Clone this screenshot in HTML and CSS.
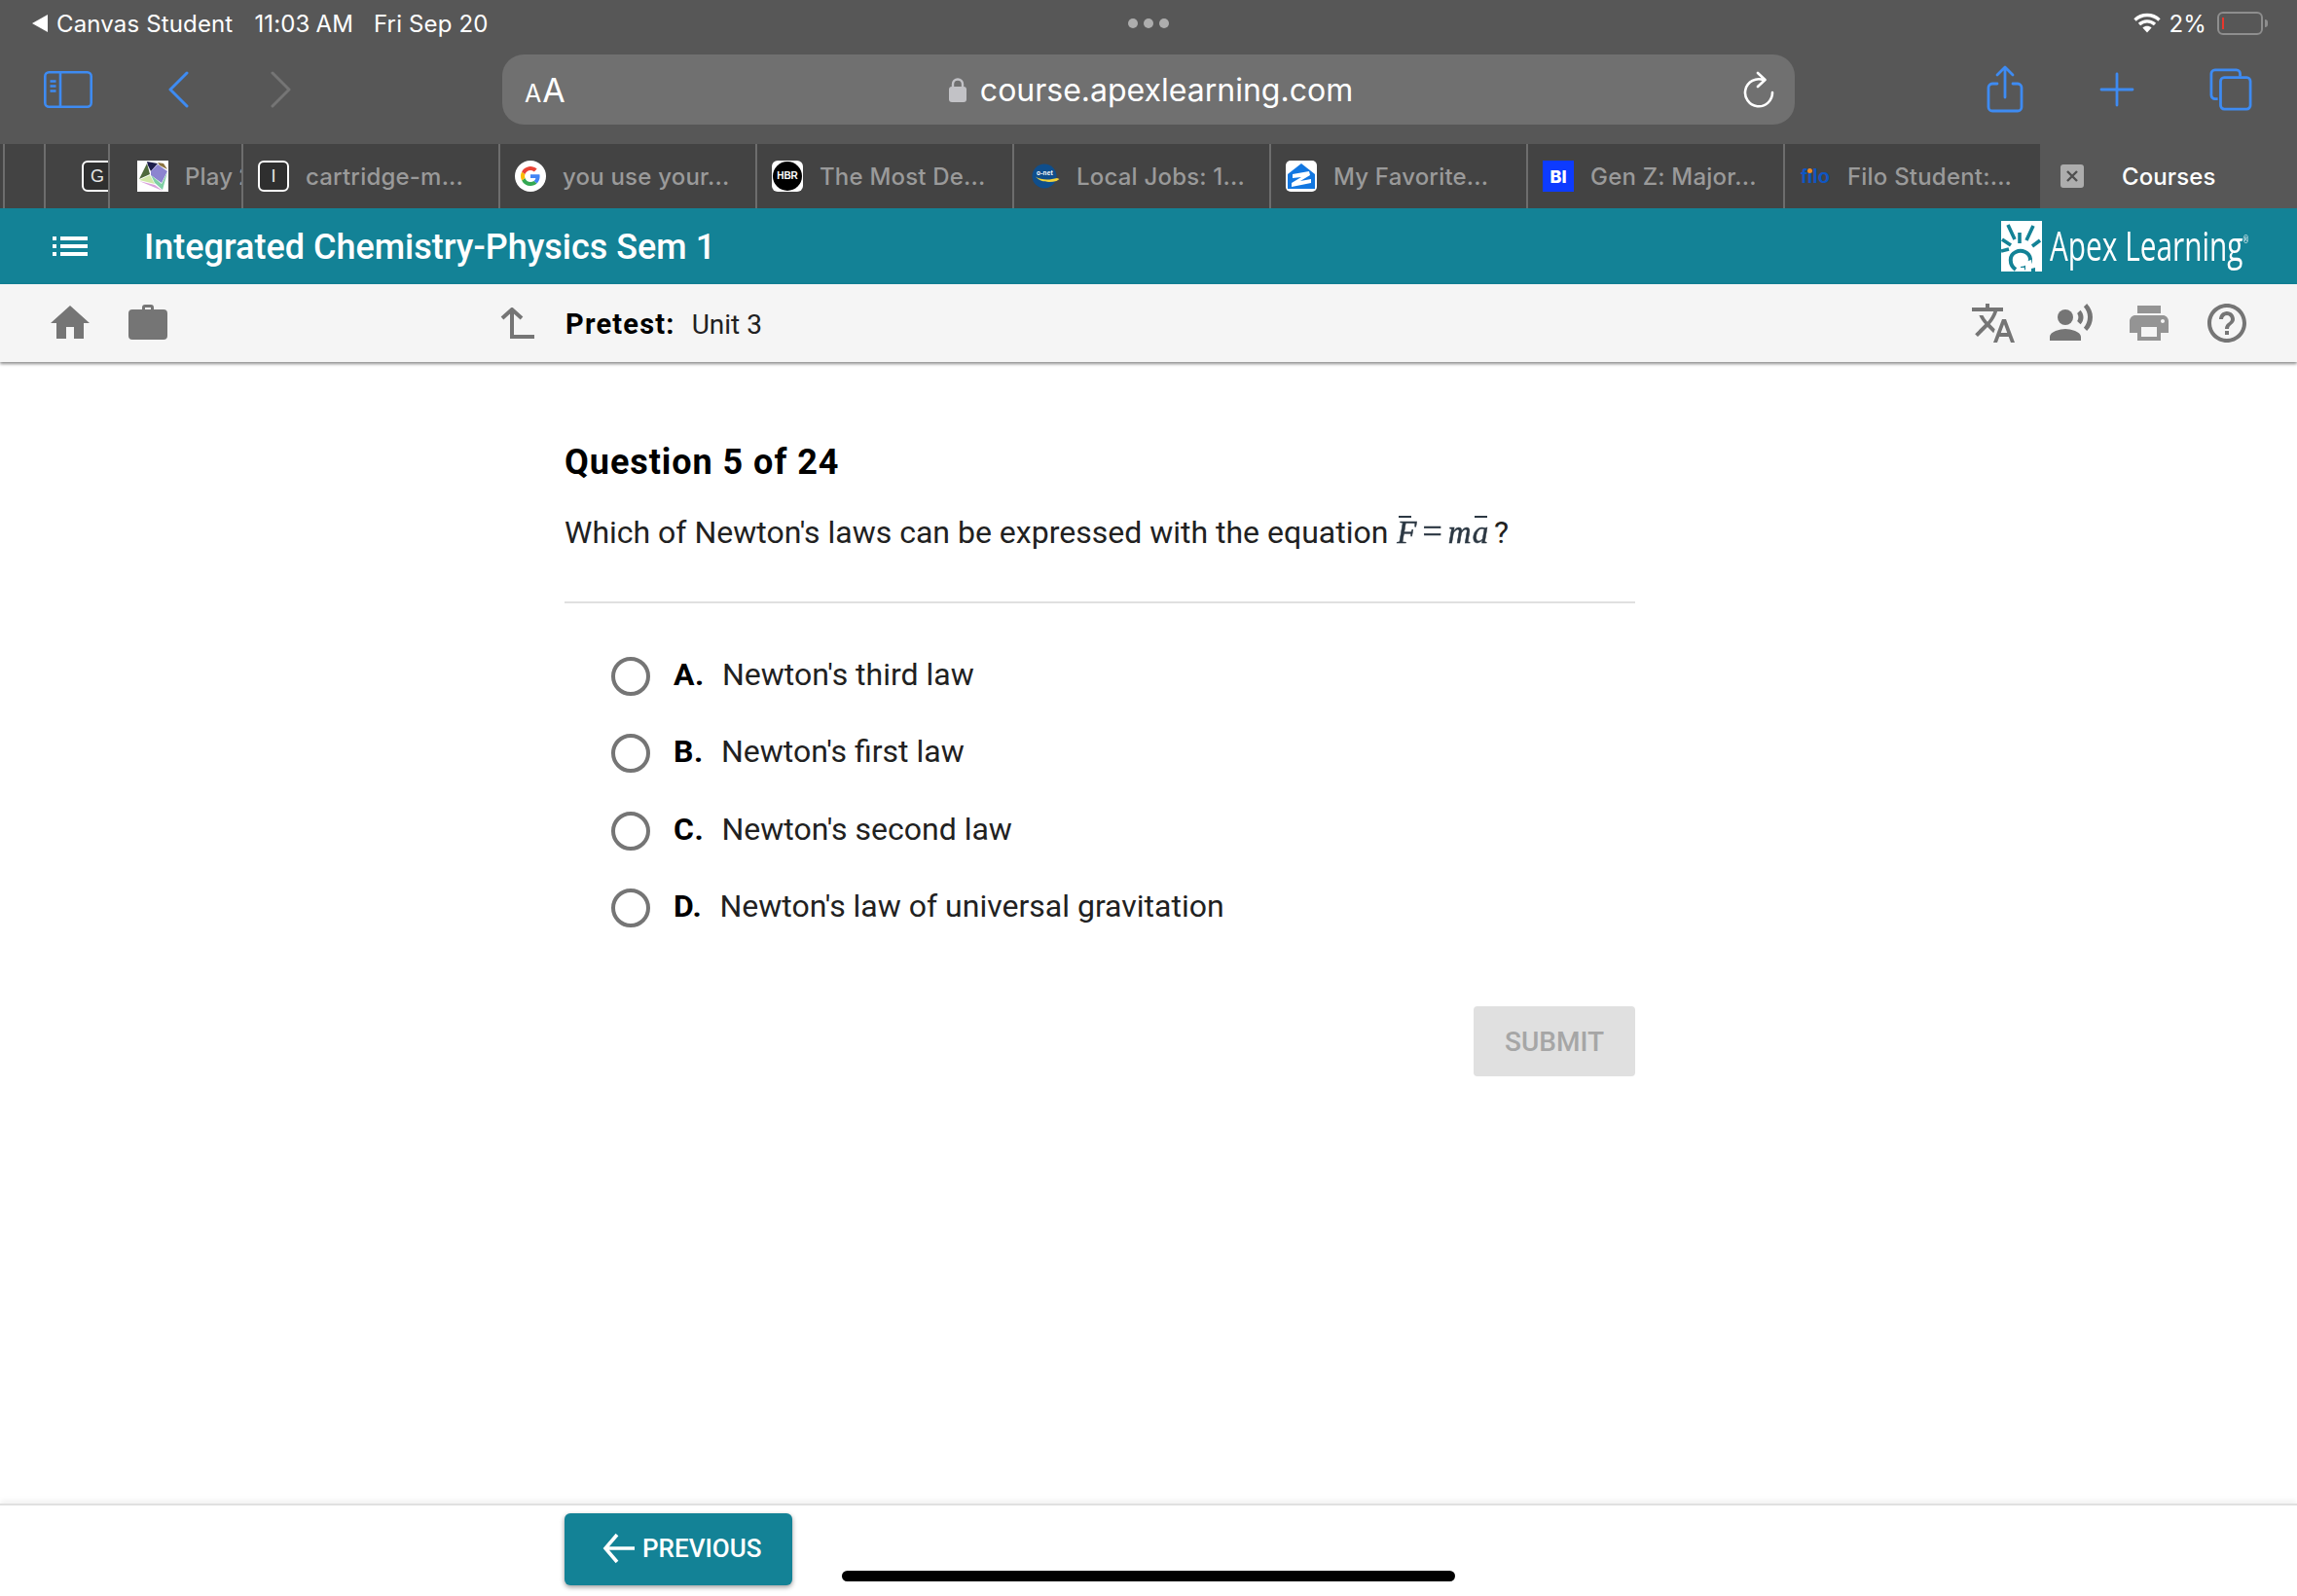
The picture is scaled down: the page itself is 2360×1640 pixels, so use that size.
FILE: index.html
```html
<!DOCTYPE html>
<html lang="en">
<head>
<meta charset="utf-8">
<title>Pretest: Unit 3</title>
<link rel="stylesheet" href="styles.css">
</head>
<body>
<div class="screen">
  <div class="status">
    <div class="status-left">
      <span class="back-tri"></span><span class="s-app">Canvas Student</span><span class="s-time">11:03 AM</span><span>Fri Sep 20</span>
    </div>
    <div class="status-dots"><i></i><i></i><i></i></div>
    <div class="status-right">
      <svg class="wifi" width="28" height="24" viewBox="0 0 28 24"><path d="M1.5 8.5C8.5 1.8 19.5 1.8 26.5 8.5" fill="none" stroke="#fff" stroke-width="3.4"/><path d="M6 13C10.6 8.8 17.4 8.8 22 13" fill="none" stroke="#fff" stroke-width="3.4"/><path d="M9.4 16.6 14 21.5 18.6 16.6C16 14.2 12 14.2 9.4 16.6Z" fill="#fff"/></svg>
      <span class="pct">2%</span>
      <span class="battery"><b></b></span><span class="batt-tip"></span>
    </div>
  </div>

  <div class="toolbar">
    <div class="tool-left">
      <svg class="ic-side" width="50" height="38" viewBox="0 0 50 38" fill="none" stroke="#3e8bf2" stroke-width="2.6"><rect x="1.3" y="1.3" width="47.4" height="35.4" rx="4"/><path d="M17 1v36M6.5 10.5h6M6.5 15.5h6M6.5 20.5h6"/></svg>
      <svg class="ic-back" width="22" height="38" viewBox="0 0 22 38" fill="none" stroke="#3e8bf2" stroke-width="3" stroke-linecap="round" stroke-linejoin="round"><path d="M20 2 3 19 20 36"/></svg>
      <svg class="ic-fwd" width="22" height="38" viewBox="0 0 22 38" fill="none" stroke="#757575" stroke-width="3" stroke-linecap="round" stroke-linejoin="round"><path d="M2 2 19 19 2 36"/></svg>
    </div>
    <div class="urlbar">
      <span class="aa"><small>A</small>A</span>
      <span class="url">
        <svg width="18" height="26" viewBox="0 0 18 26"><path d="M4 12V7.5a5 5 0 0 1 10 0V12" fill="none" stroke="#c2c2c6" stroke-width="2.4"/><rect y="10" width="18" height="16" rx="3" fill="#c2c2c6"/></svg>
        course.apexlearning.com
      </span>
      <svg class="reload" width="32" height="38" viewBox="0 0 32 38" fill="none" stroke="#fff" stroke-width="2.6" stroke-linecap="round" stroke-linejoin="round"><path d="M21 9.2A14 14 0 1 0 30 22M15 2l7.500 7-7.500 7"/></svg>
    </div>
    <div class="tool-right">
      <svg width="40" height="50" viewBox="0 0 40 50" fill="none" stroke="#3e8bf2" stroke-width="2.8" stroke-linecap="round" stroke-linejoin="round"><path d="M12 19H7a4 4 0 0 0-4 4v20a4 4 0 0 0 4 4h26a4 4 0 0 0 4-4V23a4 4 0 0 0-4-4h-5M20 33V3M12 10l8-8 8 8"/></svg>
      <svg width="36" height="36" viewBox="0 0 36 36" fill="none" stroke="#3e8bf2" stroke-width="2.8" stroke-linecap="round"><path d="M18 2v32M2 18h32"/></svg>
      <svg width="44" height="44" viewBox="0 0 46 46" fill="none" stroke="#3e8bf2" stroke-width="2.9"><path d="M9 33H6a4 4 0 0 1-4-4V6a4 4 0 0 1 4-4h23a4 4 0 0 1 4 4v3"/><rect x="12" y="10" width="32" height="34" rx="4"/></svg>
    </div>
  </div>

  <div class="tabs">
    <div class="tab t-blank"></div>
    <div class="tab t-clip1"><span class="fav fav-dark">G</span></div>
    <div class="tab t-clip2">
      <svg class="fav" width="32" height="32" viewBox="0 0 32 32"><rect width="32" height="32" fill="#fff"/><path d="M2 19 10 3 13 14Z" fill="#4f6b3c"/><path d="M10 1 21 3 14 11 11 5Z" fill="#1c1c4a"/><path d="M21 2 27 3 31 9 23 5Z" fill="#8b7340"/><path d="M14 11 21 4 31 11 25 23 14 15Z" fill="#8c84d0"/><path d="M2 20 13 15 18 24Z" fill="#d0e8a8"/><path d="M14 15 25 24 31 12 26 30 18 23Z" fill="#80cfa5"/><path d="M2 21 18 25 26 31Z" fill="#d9a0dc"/></svg>
      <span class="tab-text t-play">Play 2048</span>
    </div>
    <div class="tab"><span class="fav fav-dark">I</span><span class="tab-text">cartridge-m...</span></div>
    <div class="tab">
      <svg class="fav" width="32" height="32" viewBox="0 0 32 32"><circle cx="16" cy="16" r="16" fill="#fff"/><path d="M25.6 16.3c0-.7-.1-1.300-.2-2H16v3.800h5.400a4.600 4.600 0 0 1-2 3l3.200 2.500c1.900-1.800 3-4.400 3-7.300Z" fill="#4285f4"/><path d="M16 26c2.700 0 5-.9 6.600-2.400l-3.200-2.500c-.9.600-2 1-3.400 1-2.600 0-4.800-1.800-5.600-4.100l-3.300 2.500A10 10 0 0 0 16 26Z" fill="#34a853"/><path d="M10.400 18a6 6 0 0 1 0-3.900L7.100 11.500a10 10 0 0 0 0 9Z" fill="#fbbc05"/><path d="M16 10c1.500 0 2.800.5 3.800 1.500l2.900-2.900A10 10 0 0 0 7.100 11.500l3.300 2.600C11.200 11.800 13.400 10 16 10Z" fill="#ea4335"/></svg>
      <span class="tab-text">you use your...</span>
    </div>
    <div class="tab">
      <span class="fav fav-hbr"><span>HBR</span></span>
      <span class="tab-text">The Most De...</span>
    </div>
    <div class="tab">
      <svg class="fav" width="32" height="32" viewBox="0 0 32 32"><circle cx="16" cy="16" r="12.500" fill="#0f4e8c"/><path d="M7 16.500c6 4 15 3.500 22 1.500l2.500 1-3 2c-8 2-17 1-21.500-4.500Z" fill="#f2d43a"/><text x="8" y="14.500" class="onet">o-net</text></svg>
      <span class="tab-text">Local Jobs: 1...</span>
    </div>
    <div class="tab">
      <svg class="fav" width="32" height="32" viewBox="0 0 32 32"><rect width="32" height="32" rx="5" fill="#fff"/><path d="M16 3 30 14v15H2V14Z" fill="#1277e1"/><path d="M7 14 24 11l1 4L15 21l11-2v4L6 27v-4l10-6-9 1Z" fill="#fff"/></svg>
      <span class="tab-text">My Favorite...</span>
    </div>
    <div class="tab"><span class="fav fav-bi">BI</span><span class="tab-text">Gen Z: Major...</span></div>
    <div class="tab"><span class="fav fav-filo">f<span class="filo-i">i</span>lo</span><span class="tab-text">Filo Student:...</span></div>
    <div class="tab tab-active">
      <span class="tab-x"><svg width="14" height="14" viewBox="0 0 14 14" stroke="#4f4f4f" stroke-width="2.400"><path d="M2 2l10 10M12 2 2 12"/></svg></span>
      <span class="tab-text-active">Courses</span>
    </div>
  </div>

  <header class="course">
    <svg class="menu" width="36" height="20" viewBox="0 0 36 20" fill="#fff"><path d="M0 0h4v4H0zM8 0h28v4H8zM0 8h4v4H0zM8 8h28v4H8zM0 16h4v4H0zM8 16h28v4H8z"/></svg>
    <h1 class="course-title">Integrated Chemistry-Physics Sem 1</h1>
    <div class="logo">
      <svg width="42" height="52" viewBox="0 0 42 52"><rect width="42" height="52" fill="#fff"/><g stroke="#138296" stroke-width="3.600" fill="none"><path d="M7 4l7 15M19 12v11M33 5l-7 15M40 20l-8 6M1 19l9 6M0 31l8-2"/><path d="M15 50c-7-5-7-15 0-18 6-3 14 0 15 7 0 6-4 10-10 10" stroke-width="4"/></g><path d="M16 52h8v-4h-8zM25 52V42l6-2v12z" fill="#fff"/><path d="M31 49l4-1v4h-4z" fill="#138296"/></svg>
      <span class="logo-text">Apex Learning<sup>®</sup></span>
    </div>
  </header>

  <nav class="subnav">
    <div class="nav-icons">
      <svg class="mi" viewBox="0 0 24 24"><path d="M10 20v-6h4v6h5v-8h3L12 3 2 12h3v8z"/></svg>
      <svg class="mi" viewBox="0 0 24 24"><path d="M9 5V4a1.500 1.500 0 0 1 1.500-1.500h3A1.500 1.500 0 0 1 15 4v1h5a2 2 0 0 1 2 2v11.500a2 2 0 0 1-2 2H4a2 2 0 0 1-2-2V7a2 2 0 0 1 2-2zm1.500 0h3V4h-3z" fill-rule="evenodd"/></svg>
    </div>
    <svg class="up" width="36" height="32" viewBox="0 0 36 32" fill="none" stroke="#757575" stroke-width="4"><path d="M2 11 12 2l10 9"/><path d="M12 3v27h23"/></svg>
    <div class="crumb"><strong>Pretest:</strong><span>Unit 3</span></div>
    <div class="nav-tools">
      <svg class="mi" viewBox="0 0 24 24"><path d="M12.870 15.070l-2.540-2.510.03-.03c1.740-1.940 2.980-4.170 3.710-6.530H17V4h-7V2H8v2H1v1.990h11.170C11.500 7.920 10.430 9.750 9 11.350 8.070 10.320 7.300 9.190 6.690 8h-2c.73 1.630 1.730 3.170 2.980 4.560l-5.090 5.020L4 19l5-5 3.110 3.110.76-2.040zM18.500 10h-2L12 22h2l1.120-3h4.750L21 22h2l-4.500-12zm-2.620 7l1.620-4.330L19.120 17h-3.240z"/></svg>
      <svg class="mi" viewBox="0 0 24 24"><circle cx="9" cy="9" r="4"/><path d="M9 15c-2.670 0-8 1.340-8 4v2h16v-2c0-2.660-5.330-4-8-4zm7.760-9.640l-1.680 1.690c.84 1.180.84 2.710 0 3.890l1.680 1.690c2.020-2.020 2.020-5.070 0-7.270zM20.070 2l-1.630 1.630c2.770 3.020 2.770 7.560 0 10.740L20.070 16c3.900-3.890 3.910-9.950 0-14z"/></svg>
      <svg class="mi mi-print" viewBox="0 0 24 24"><path d="M19 8H5c-1.660 0-3 1.340-3 3v6h4v4h12v-4h4v-6c0-1.660-1.340-3-3-3zm-3 11H8v-5h8v5zm3-7c-.55 0-1-.45-1-1s.45-1 1-1 1 .45 1 1-.45 1-1 1zm-1-9H6v4h12V3z"/></svg>
      <svg class="mi" viewBox="0 0 24 24"><path d="M11 18h2v-2h-2v2zm1-16C6.480 2 2 6.480 2 12s4.480 10 10 10 10-4.480 10-10S17.520 2 12 2zm0 18c-4.410 0-8-3.590-8-8s3.590-8 8-8 8 3.590 8 8-3.590 8-8 8zm0-14c-2.210 0-4 1.790-4 4h2c0-1.100.9-2 2-2s2 .9 2 2c0 2-3 1.750-3 5h2c0-2.250 3-2.500 3-5 0-2.210-1.790-4-4-4z"/></svg>
    </div>
  </nav>

  <main class="content">
    <h2 class="q-count">Question 5 of 24</h2>
    <p class="q-text">Which of Newton's laws can be expressed with the equation <span class="eq"><i class="vec">F</i><span class="eq-eq">=</span><i>m</i><i class="vec">a</i></span> ?</p>
    <hr class="rule">
    <ul class="options">
      <li class="option"><span class="radio"></span><b>A.</b><span>Newton's third law</span></li>
      <li class="option"><span class="radio"></span><b>B.</b><span>Newton's first law</span></li>
      <li class="option"><span class="radio"></span><b>C.</b><span>Newton's second law</span></li>
      <li class="option"><span class="radio"></span><b>D.</b><span>Newton's law of universal gravitation</span></li>
    </ul>
    <div class="submit-row"><button class="submit" type="button">SUBMIT</button></div>
  </main>

  <footer class="footer">
    <button class="prev" type="button">
      <svg width="34" height="32" viewBox="0 0 34 32" fill="none" stroke="#fff" stroke-width="3.600"><path d="M15 2 3 16l12 14M3 16h30"/></svg>
      <span>PREVIOUS</span>
    </button>
  </footer>
  <div class="home-bar"></div>
</div>
</body>
</html>
```

FILE: styles.css
```css
* { box-sizing: border-box; }
html, body { margin: 0; padding: 0; }
body { background: #fff; font-family: Roboto, "Liberation Sans", sans-serif; }
.screen { position: relative; width: 2360px; height: 1640px; overflow: hidden; display: flex; flex-direction: column; }

/* iPad status bar */
.status { height: 56px; flex: none; background: #575757; color: #fff; font: 400 24px Inter, "Liberation Sans", sans-serif; letter-spacing: .15px; padding: 0 30px 8px 30px; display: grid; grid-template-columns: 1fr auto 1fr; align-items: center; }
.status-left { display: flex; align-items: center; }
.back-tri { width: 0; height: 0; border: 9px solid transparent; border-right: 16px solid #fff; border-left: 0; margin: 0 9px 0 3px; }
.s-app { margin-right: 22px; }
.s-time { margin-right: 21px; word-spacing: -1px; }
.status-dots { display: flex; gap: 6px; }
.status-dots i { width: 10px; height: 10px; border-radius: 50%; background: #adadad; }
.status-right { display: flex; align-items: center; justify-content: flex-end; }
.wifi { margin-right: 8px; }
.pct { margin-right: 11px; }
.battery { width: 47px; height: 24px; border: 2px solid #8e8e8e; border-radius: 6px; padding: 4px 3px; display: block; }
.battery b { display: block; width: 2px; height: 100%; background: #e8372c; }
.batt-tip { width: 3px; height: 8px; background: #8e8e8e; border-radius: 0 3px 3px 0; margin-left: 2px; }

/* Safari toolbar */
.toolbar { height: 92px; flex: none; background: #575757; padding: 0 0 20px; display: flex; align-items: center; }
.tool-left { width: 516px; flex: none; display: flex; align-items: center; padding-left: 45px; }
.ic-back { margin-left: 77px; }
.ic-fwd { margin-left: 84px; }
.urlbar { width: 1328px; height: 72px; flex: none; background: #707070; border-radius: 22px; display: flex; align-items: center; justify-content: space-between; padding: 0 21px 0 23px; position: relative; }
.aa { color: #fff; font: 400 34px Inter, "Liberation Sans", sans-serif; }
.aa small { font-size: 25px; margin-right: 1px; }
.url { position: absolute; left: 0; right: 0; display: flex; justify-content: center; align-items: center; gap: 14px; color: #fff; font: 400 32px Inter, "Liberation Sans", sans-serif; padding-left: 5px; }
.reload { margin-left: auto; }
.tool-right { flex: 1; display: flex; align-items: center; padding-left: 196px; gap: 77px; }

/* Tab strip */
.tabs { height: 66px; flex: none; background: #434343; display: flex; }
.tab { width: 264px; flex: none; height: 66px; border-left: 2px solid #6d6d6d; display: flex; align-items: center; padding-left: 15px; overflow: hidden; white-space: nowrap; font: 500 24px Inter, "Liberation Sans", sans-serif; letter-spacing: .2px; color: #9a9a9a; }
.t-blank { width: 42px; margin-left: 3px; }
.t-clip1 { width: 66px; padding-left: 37px; }
.t-clip2 { width: 137px; padding-left: 28px; }
.t-play { margin-left: 15px; word-spacing: -1px; }
.fav { width: 32px; height: 32px; flex: none; display: inline-flex; align-items: center; justify-content: center; }
.fav-dark { background: #2f2f2f; border: 2.500px solid #fff; border-radius: 6px; color: #e6e6e6; font: 400 18px "Liberation Sans", sans-serif; letter-spacing: 0; }
.t-clip1 .fav-dark { justify-content: flex-start; padding-left: 7px; }
.fav-hbr { background: #fff; border-radius: 6px; }
.fav-hbr span { width: 30px; height: 30px; border-radius: 50%; background: #000; color: #fff; font: 700 10px/30px "Liberation Sans", sans-serif; letter-spacing: 0; text-align: center; }
.onet { font: 700 6.500px "Liberation Sans", sans-serif; fill: #fff; }
.fav-bi { background: #0d3bff; color: #fff; font: 800 18px Inter, "Liberation Sans", sans-serif; letter-spacing: 0; }
.fav-filo { color: #0f56c3; font: 700 20px "Liberation Sans", sans-serif; letter-spacing: 0; }
.filo-i { position: relative; }
.filo-i::after { content: ""; position: absolute; left: 0; top: 3px; width: 5px; height: 5px; border-radius: 50%; background: #f08a1d; }
.tab-text { margin-left: 17px; }
.tab-active { background: #575757; border-left: 0; padding-left: 21px; width: 264px; letter-spacing: .1px; }
.tab-x { width: 24px; height: 24px; background: #adadad; border-radius: 3px; display: flex; align-items: center; justify-content: center; }
.tab-text-active { margin-left: 39px; color: #fff; }

/* Course header */
.course { height: 78px; flex: none; background: #138296; display: flex; align-items: center; padding: 0 46px 0 54px; color: #fff; }
.course-title { margin: 2px 0 0 58px; font: 500 36px Roboto, sans-serif; flex: 1; }
.logo { display: flex; align-items: center; }
.logo-text { display: inline-block; font: 500 42px "Open Sans", sans-serif; transform: scaleX(.71); transform-origin: left center; width: 208px; margin-left: 8px; white-space: nowrap; position: relative; top: -2px; }
.logo-text sup { font-size: 10px; vertical-align: 18px; }

/* Sub navigation */
.subnav { height: 80px; flex: none; background: #f5f5f5; display: flex; align-items: center; padding: 0 48px 0 32px; box-shadow: 0 2px 3px rgba(0,0,0,.45); position: relative; }
.nav-icons { display: flex; width: 450px; flex: none; }
.mi { width: 48px; height: 48px; fill: #757575; display: block; flex: none; }
.nav-icons .mi { margin: 0 16px; }
.up { flex: none; margin-left: 32px; }
.crumb { margin-left: 31px; padding-top: 1px; font-size: 28px; display: flex; gap: 17px; color: #212121; flex: 1; align-items: baseline; }
.crumb strong { color: #000; font-size: 29px; font-weight: 700; letter-spacing: 1.2px; }
.nav-tools { display: flex; gap: 32px; }
.mi-print { fill: #949494; }

/* Question */
.content { flex: 1; width: 1100px; margin-left: 580px; min-height: 0; padding-top: 80px; color: #212121; }
.q-count { margin: 0; font: 700 36px/46px Roboto, sans-serif; color: #000; letter-spacing: .95px; }
.q-text { margin: 24px 0 0; font: 400 32px/50px Roboto, sans-serif; }
.eq { font: italic 33px "Liberation Serif", serif; color: #2c3843; margin: 0 -3px 0 1px; letter-spacing: 1px; -webkit-text-stroke: .5px #2c3843; filter: blur(.45px); }
.eq i { position: relative; }
.eq-eq { font-style: normal; font-size: 36px; margin: 0 5px; }
.vec::before { content: ""; position: absolute; left: 2px; top: 1px; width: 13px; height: 2px; background: #2c3843; }
.rule { border: 0; height: 2px; background: #e0e0e0; margin: 46px 0 0; }
.options { list-style: none; margin: 33px 0 0; padding: 0 0 0 47px; }
.option { height: 79.500px; display: flex; align-items: center; font: 400 32px Roboto, sans-serif; }
.option b { color: #000; font-weight: 700; letter-spacing: .6px; margin-right: 18px; }
.radio { width: 40px; height: 40px; border: 4px solid #757575; border-radius: 50%; margin: 0 24px 0 1px; flex: none; position: relative; top: 2px; }
.submit-row { display: flex; justify-content: flex-end; margin-top: 63px; }
.submit { width: 166px; height: 72px; border: 0; border-radius: 4px; background: #e0e0e0; color: #a6a6a6; font: 500 28px Roboto, sans-serif; padding: 0; }

/* Footer */
.footer { height: 95px; flex: none; border-top: 2px solid #e0e0e0; box-shadow: 0 -3px 6px rgba(0,0,0,.06); background: #fff; padding: 8px 0 0 580px; position: relative; }
.prev { width: 234px; height: 74px; border: 0; border-radius: 6px; background: #138296; color: #fff; font: 500 26px Roboto, sans-serif; display: flex; align-items: center; gap: 7px; box-shadow: 0 2px 5px rgba(0,0,0,.4); padding: 0 0 2px 39px; }
.home-bar { position: absolute; left: 865px; top: 1614px; width: 630px; height: 11px; background: #000; border-radius: 6px; }
```
